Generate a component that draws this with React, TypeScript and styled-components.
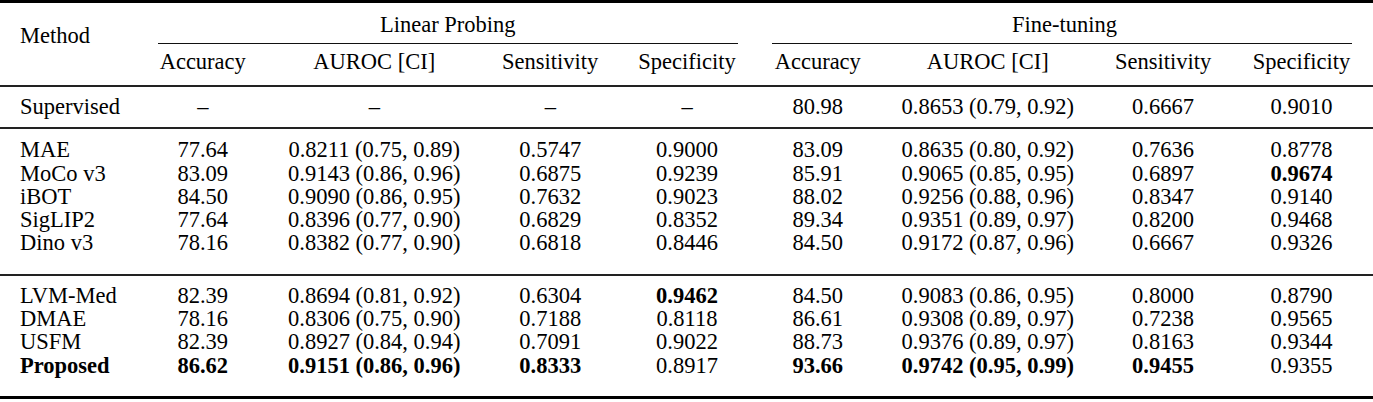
import * as React from "react";
import styled, { createGlobalStyle } from "styled-components";

const GlobalStyle = createGlobalStyle`
  html, body {
    margin: 0;
    padding: 0;
    background: #fff;
  }
`;

const Table = styled.table`
  width: 1373px;
  table-layout: fixed;
  border-collapse: collapse;
  font-family: "Liberation Serif", "Times New Roman", serif;
  font-size: 22.5px;
  color: #000;
  border-top: 3px solid #000;
  border-bottom: 3px solid #000;
`;

const Section = styled.tbody`
  border-top: 2px solid #222;
`;

const Head = styled.thead``;

const MethodHead = styled.th`
  text-align: left;
  vertical-align: top;
  font-weight: normal;
  padding: 20px 0 0 20px;
  line-height: 26px;
`;

const GroupHead = styled.th`
  font-weight: normal;
  padding: 9px 0 0;
  vertical-align: top;
  height: 40px;
  box-sizing: border-box;
`;

const GroupLabel = styled.div`
  line-height: 26px;
  text-align: center;
`;

const CMidRule = styled.div<{ $left: number; $right: number }>`
  margin: 5px ${(p) => p.$right}px 0 ${(p) => p.$left}px;
  border-top: 1px solid #111;
`;

const ColHead = styled.th`
  font-weight: normal;
  text-align: center;
  line-height: 26px;
  padding: 5px 0 10px;
`;

const Cell = styled.td<{ $bold?: boolean; $left?: boolean; $top: number; $bottom: number }>`
  text-align: ${(p) => (p.$left ? "left" : "center")};
  padding: ${(p) => p.$top}px 0 ${(p) => p.$bottom}px ${(p) => (p.$left ? 20 : 0)}px;
  line-height: 23.3px;
  font-weight: ${(p) => (p.$bold ? "bold" : "normal")};
  white-space: nowrap;
`;

const widths = [139.5, 126.5, 216.5, 135.5, 138, 123.5, 216.5, 134, 143];
const metrics = ["Accuracy", "AUROC [CI]", "Sensitivity", "Specificity"];

type Row = string[];

const supervised: Row[] = [
  ["Supervised", "–", "–", "–", "–", "80.98", "0.8653 (0.79, 0.92)", "0.6667", "0.9010"],
];

const generic: Row[] = [
  ["MAE", "77.64", "0.8211 (0.75, 0.89)", "0.5747", "0.9000", "83.09", "0.8635 (0.80, 0.92)", "0.7636", "0.8778"],
  ["MoCo v3", "83.09", "0.9143 (0.86, 0.96)", "0.6875", "0.9239", "85.91", "0.9065 (0.85, 0.95)", "0.6897", "*0.9674"],
  ["iBOT", "84.50", "0.9090 (0.86, 0.95)", "0.7632", "0.9023", "88.02", "0.9256 (0.88, 0.96)", "0.8347", "0.9140"],
  ["SigLIP2", "77.64", "0.8396 (0.77, 0.90)", "0.6829", "0.8352", "89.34", "0.9351 (0.89, 0.97)", "0.8200", "0.9468"],
  ["Dino v3", "78.16", "0.8382 (0.77, 0.90)", "0.6818", "0.8446", "84.50", "0.9172 (0.87, 0.96)", "0.6667", "0.9326"],
];

const medical: Row[] = [
  ["LVM-Med", "82.39", "0.8694 (0.81, 0.92)", "0.6304", "*0.9462", "84.50", "0.9083 (0.86, 0.95)", "0.8000", "0.8790"],
  ["DMAE", "78.16", "0.8306 (0.75, 0.90)", "0.7188", "0.8118", "86.61", "0.9308 (0.89, 0.97)", "0.7238", "0.9565"],
  ["USFM", "82.39", "0.8927 (0.84, 0.94)", "0.7091", "0.9022", "88.73", "0.9376 (0.89, 0.97)", "0.8163", "0.9344"],
  ["*Proposed", "*86.62", "*0.9151 (0.86, 0.96)", "*0.8333", "0.8917", "*93.66", "*0.9742 (0.95, 0.99)", "*0.9455", "0.9355"],
];

function Group({ rows, top, bottom }: { rows: Row[]; top: number; bottom: number }) {
  return (
    <Section>
      {rows.map((row, r) => (
        <tr key={r}>
          {row.map((v, c) => {
            const bold = v.startsWith("*");
            return (
              <Cell
                key={c}
                $bold={bold}
                $left={c === 0}
                $top={r === 0 ? top : 0}
                $bottom={r === rows.length - 1 ? bottom : 0}
              >
                {bold ? v.slice(1) : v}
              </Cell>
            );
          })}
        </tr>
      ))}
    </Section>
  );
}

export default function App() {
  return (
    <>
      <GlobalStyle />
      <Table>
        <colgroup>
          {widths.map((w, i) => (
            <col key={i} style={{ width: w }} />
          ))}
        </colgroup>
        <Head>
          <tr>
            <MethodHead rowSpan={2}>Method</MethodHead>
            <GroupHead colSpan={4}>
              <GroupLabel>Linear Probing</GroupLabel>
              <CMidRule $left={18} $right={18} />
            </GroupHead>
            <GroupHead colSpan={4}>
              <GroupLabel>Fine-tuning</GroupLabel>
              <CMidRule $left={16} $right={21} />
            </GroupHead>
          </tr>
          <tr>
            {[...metrics, ...metrics].map((m, i) => (
              <ColHead key={i}>{m}</ColHead>
            ))}
          </tr>
        </Head>
        <Group rows={supervised} top={8} bottom={9} />
        <Group rows={generic} top={9} bottom={19} />
        <Group rows={medical} top={8} bottom={19} />
      </Table>
    </>
  );
}
